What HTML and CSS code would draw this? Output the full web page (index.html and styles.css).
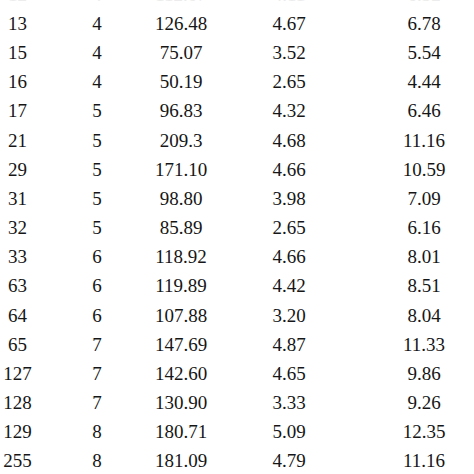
FILE: index.html
```html
<!DOCTYPE html>
<html>
<head>
<meta charset="utf-8">
<link rel="stylesheet" href="styles.css">
</head>
<body>
<div class="table">
  <div class="row faint"><span>12</span><span>4</span><span>112.07</span><span>4.11</span><span>6.52</span></div>
  <div class="row"><span>13</span><span>4</span><span>126.48</span><span>4.67</span><span>6.78</span></div>
  <div class="row"><span>15</span><span>4</span><span>75.07</span><span>3.52</span><span>5.54</span></div>
  <div class="row"><span>16</span><span>4</span><span>50.19</span><span>2.65</span><span>4.44</span></div>
  <div class="row"><span>17</span><span>5</span><span>96.83</span><span>4.32</span><span>6.46</span></div>
  <div class="row"><span>21</span><span>5</span><span>209.3</span><span>4.68</span><span>11.16</span></div>
  <div class="row"><span>29</span><span>5</span><span>171.10</span><span>4.66</span><span>10.59</span></div>
  <div class="row"><span>31</span><span>5</span><span>98.80</span><span>3.98</span><span>7.09</span></div>
  <div class="row"><span>32</span><span>5</span><span>85.89</span><span>2.65</span><span>6.16</span></div>
  <div class="row"><span>33</span><span>6</span><span>118.92</span><span>4.66</span><span>8.01</span></div>
  <div class="row"><span>63</span><span>6</span><span>119.89</span><span>4.42</span><span>8.51</span></div>
  <div class="row"><span>64</span><span>6</span><span>107.88</span><span>3.20</span><span>8.04</span></div>
  <div class="row"><span>65</span><span>7</span><span>147.69</span><span>4.87</span><span>11.33</span></div>
  <div class="row"><span>127</span><span>7</span><span>142.60</span><span>4.65</span><span>9.86</span></div>
  <div class="row"><span>128</span><span>7</span><span>130.90</span><span>3.33</span><span>9.26</span></div>
  <div class="row"><span>129</span><span>8</span><span>180.71</span><span>5.09</span><span>12.35</span></div>
  <div class="row"><span>255</span><span>8</span><span>181.09</span><span>4.79</span><span>11.16</span></div>
</div>
</body>
</html>
```
FILE: styles.css
```css
html, body {
  margin: 0;
  padding: 0;
  background: #ffffff;
  overflow: hidden;
}
body {
  font-family: "Liberation Serif", "Times New Roman", serif;
  font-size: 19px;
  color: #161616;
}
.table {
  margin-top: -20.2px;
  display: flex;
  flex-direction: column;
}
.row {
  display: grid;
  grid-template-columns: 35px 124px 44px 172px 98px;
  justify-items: center;
  height: 29.17px;
  line-height: 29.17px;
  white-space: nowrap;
}
.row.faint {
  color: #ececec;
}
```
